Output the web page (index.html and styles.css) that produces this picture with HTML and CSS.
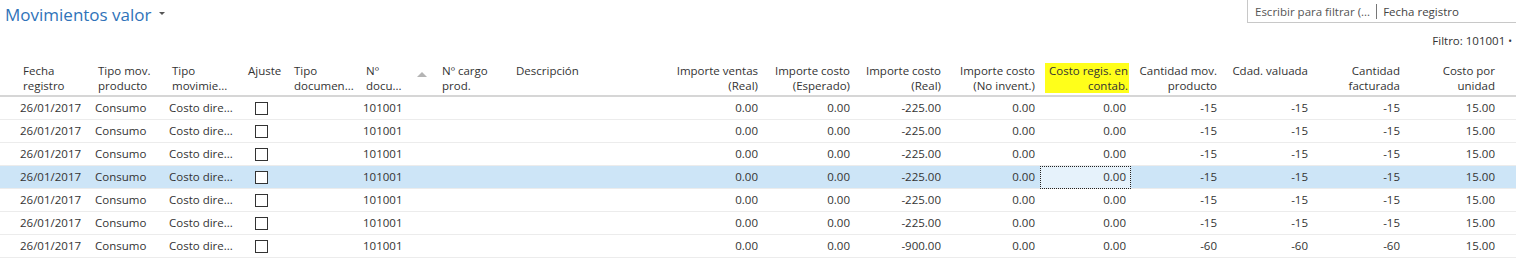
FILE: index.html
```html
<!DOCTYPE html>
<html lang="es">
<head>
<meta charset="utf-8">
<title>Movimientos valor</title>
<link rel="stylesheet" href="styles.css">
</head>
<body>
<div class="topbar">
  <div class="title">Movimientos valor <span class="caret"></span></div>
  <div class="search">
    <span class="search-ph">Escribir para filtrar (...</span>
    <span class="search-sep"></span>
    <span class="search-field">Fecha registro</span>
  </div>
</div>
<div class="filterline">Filtro: 101001 <span class="dot">•</span></div>
<table class="grid">
  <colgroup>
    <col class="w90"><col class="w74"><col class="w76"><col class="w46"><col class="w72"><col class="w76"><col class="w74"><col class="w162">
    <col class="w93"><col class="w92"><col class="w91"><col class="w94"><col class="w91"><col class="w91"><col class="w91"><col class="w92"><col class="w111">
  </colgroup>
  <thead>
    <tr>
      <th class="first">Fecha<br>registro</th>
      <th>Tipo mov.<br>producto</th>
      <th>Tipo<br>movimie...</th>
      <th>Ajuste</th>
      <th>Tipo<br>documen...</th>
      <th class="sorted">Nº<br>docu...<span class="sortarrow"></span></th>
      <th>Nº cargo<br>prod.</th>
      <th>Descripción</th>
      <th class="num">Importe ventas<br>(Real)</th>
      <th class="num">Importe costo<br>(Esperado)</th>
      <th class="num">Importe costo<br>(Real)</th>
      <th class="num">Importe costo<br>(No invent.)</th>
      <th class="num"><span class="hl">Costo regis. en<br>contab.</span></th>
      <th class="num">Cantidad mov.<br>producto</th>
      <th class="num">Cdad. valuada</th>
      <th class="num">Cantidad<br>facturada</th>
      <th class="num last">Costo por<br>unidad</th>
    </tr>
  </thead>
  <tbody>
    <tr><td class="first">26/01/2017</td><td>Consumo</td><td>Costo dire...</td><td class="chk"><span class="box"></span></td><td></td><td>101001</td><td></td><td></td><td class="num">0.00</td><td class="num">0.00</td><td class="num">-225.00</td><td class="num">0.00</td><td class="num">0.00</td><td class="num">-15</td><td class="num">-15</td><td class="num">-15</td><td class="num last">15.00</td></tr>
    <tr><td class="first">26/01/2017</td><td>Consumo</td><td>Costo dire...</td><td class="chk"><span class="box"></span></td><td></td><td>101001</td><td></td><td></td><td class="num">0.00</td><td class="num">0.00</td><td class="num">-225.00</td><td class="num">0.00</td><td class="num">0.00</td><td class="num">-15</td><td class="num">-15</td><td class="num">-15</td><td class="num last">15.00</td></tr>
    <tr><td class="first">26/01/2017</td><td>Consumo</td><td>Costo dire...</td><td class="chk"><span class="box"></span></td><td></td><td>101001</td><td></td><td></td><td class="num">0.00</td><td class="num">0.00</td><td class="num">-225.00</td><td class="num">0.00</td><td class="num">0.00</td><td class="num">-15</td><td class="num">-15</td><td class="num">-15</td><td class="num last">15.00</td></tr>
    <tr class="selected"><td class="first">26/01/2017</td><td>Consumo</td><td>Costo dire...</td><td class="chk"><span class="box"></span></td><td></td><td>101001</td><td></td><td></td><td class="num">0.00</td><td class="num">0.00</td><td class="num">-225.00</td><td class="num">0.00</td><td class="num focus">0.00</td><td class="num">-15</td><td class="num">-15</td><td class="num">-15</td><td class="num last">15.00</td></tr>
    <tr><td class="first">26/01/2017</td><td>Consumo</td><td>Costo dire...</td><td class="chk"><span class="box"></span></td><td></td><td>101001</td><td></td><td></td><td class="num">0.00</td><td class="num">0.00</td><td class="num">-225.00</td><td class="num">0.00</td><td class="num">0.00</td><td class="num">-15</td><td class="num">-15</td><td class="num">-15</td><td class="num last">15.00</td></tr>
    <tr><td class="first">26/01/2017</td><td>Consumo</td><td>Costo dire...</td><td class="chk"><span class="box"></span></td><td></td><td>101001</td><td></td><td></td><td class="num">0.00</td><td class="num">0.00</td><td class="num">-225.00</td><td class="num">0.00</td><td class="num">0.00</td><td class="num">-15</td><td class="num">-15</td><td class="num">-15</td><td class="num last">15.00</td></tr>
    <tr><td class="first">26/01/2017</td><td>Consumo</td><td>Costo dire...</td><td class="chk"><span class="box"></span></td><td></td><td>101001</td><td></td><td></td><td class="num">0.00</td><td class="num">0.00</td><td class="num">-900.00</td><td class="num">0.00</td><td class="num">0.00</td><td class="num">-60</td><td class="num">-60</td><td class="num">-60</td><td class="num last">15.00</td></tr>
  </tbody>
</table>
</body>
</html>
```
FILE: styles.css
```css
html, body {
  margin: 0;
  padding: 0;
  background: #fff;
}
body {
  font-family: "Open Sans", "Noto Sans", "Liberation Sans", sans-serif;
  font-size: 11.5px;
  color: #333;
  width: 1516px;
  height: 263px;
  overflow: hidden;
}
.topbar {
  display: flex;
  justify-content: space-between;
  align-items: flex-start;
  height: 30px;
}
.title {
  padding: 3px 0 0 5px;
  font-size: 17px;
  line-height: 24px;
  color: #2f73b9;
  display: flex;
  align-items: center;
}
.caret {
  display: inline-block;
  width: 0;
  height: 0;
  margin-left: 7px;
  margin-top: -4px;
  border-left: 3px solid transparent;
  border-right: 3px solid transparent;
  border-top: 3px solid #555;
}
.search {
  width: 268px;
  height: 22px;
  border-left: 1px solid #c8c8c8;
  border-bottom: 1px solid #c8c8c8;
  display: flex;
  align-items: center;
  font-size: 11.5px;
  color: #444;
}
.search-ph {
  padding-left: 7px;
  color: #555;
}
.search-sep {
  width: 1px;
  height: 15px;
  background: #777;
  margin: 0 6px 0 6px;
}
.search-field {
  color: #444;
}
.filterline {
  text-align: right;
  padding-right: 4px;
  height: 22px;
  line-height: 22px;
  font-size: 11.5px;
  color: #333;
}
.filterline .dot {
  font-size: 10px;
}
.grid {
  table-layout: fixed;
  border-collapse: collapse;
  width: 1516px;
}
.w46 { width: 46px; }
.w72 { width: 72px; }
.w74 { width: 74px; }
.w76 { width: 76px; }
.w90 { width: 90px; }
.w91 { width: 91px; }
.w92 { width: 92px; }
.w93 { width: 93px; }
.w94 { width: 94px; }
.w111 { width: 111px; }
.w162 { width: 162px; }
.grid th {
  font-weight: normal;
  text-align: left;
  vertical-align: top;
  line-height: 15px;
  padding: 11px 5px 2px 8px;
  height: 30px;
  border-bottom: 2px solid #d6d6d6;
  white-space: nowrap;
  overflow: visible;
  color: #333;
}
.grid th.first {
  padding-left: 23px;
}
.grid th.num {
  text-align: right;
  padding-left: 5px;
  padding-right: 5px;
}
.grid th.last,
.grid td.last {
  padding-right: 21px;
}
.grid th.sorted {
  position: relative;
}
.sortarrow {
  position: absolute;
  top: 20px;
  right: 7px;
  width: 0;
  height: 0;
  border-left: 5px solid transparent;
  border-right: 5px solid transparent;
  border-bottom: 5px solid #b4b4b4;
}
.hl {
  display: inline-block;
  background: #ffff1a;
  padding: 0 1px 0 4px;
  margin-right: -1px;
}
.grid td {
  height: 22px;
  padding: 0 5px;
  line-height: 22px;
  border-bottom: 1px solid #ececec;
  white-space: nowrap;
  overflow: hidden;
}
.grid td.first {
  padding-left: 20px;
}
.grid td.num {
  text-align: right;
}
.grid td.chk {
  padding-left: 15px;
}
.box {
  display: inline-block;
  width: 11px;
  height: 11px;
  border: 1px solid #333;
  background: #fff;
  vertical-align: middle;
  margin-top: 0;
}
.grid tr.selected td {
  background: #cde5f7;
}
.grid tr.selected td.focus {
  background: #e6f2fb;
  outline: 1px dotted #222;
  outline-offset: -1px;
}
```
